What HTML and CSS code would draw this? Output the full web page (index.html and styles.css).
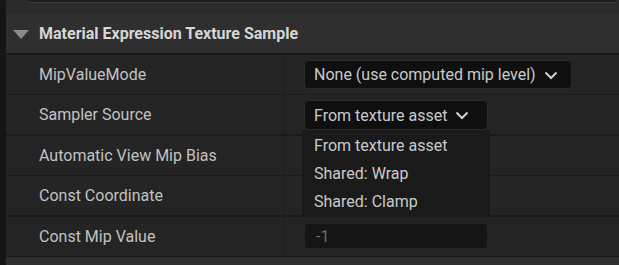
FILE: index.html
```html
<!DOCTYPE html>
<html>
<head>
<meta charset="utf-8">
<link rel="stylesheet" href="styles.css">
</head>
<body>
<div class="app">
  <div class="strip"></div>
  <div class="main">
    <div class="topbar"><div class="topbox"></div></div>
    <div class="header">
      <svg class="tri" width="16" height="9" viewBox="0 0 16 9"><polygon points="0,0 16,0 8,9" fill="#8c8c8c"/></svg>
      <span class="title">Material Expression Texture Sample</span>
    </div>
    <div class="group">
      <div class="row">
        <div class="name">MipValueMode</div>
        <div class="value">
          <div class="combo combo1">
            <span>None (use computed mip level)</span>
            <svg class="chev" width="14" height="9" viewBox="0 0 14 9"><polyline points="1.5,1.5 7,7 12.5,1.5" fill="none" stroke="#d0d0d0" stroke-width="2"/></svg>
          </div>
        </div>
      </div>
      <div class="row">
        <div class="name">Sampler Source</div>
        <div class="value">
          <div class="combo-wrap">
            <div class="combo combo2">
              <span>From texture asset</span>
              <svg class="chev" width="14" height="9" viewBox="0 0 14 9"><polyline points="1.5,1.5 7,7 12.5,1.5" fill="none" stroke="#d0d0d0" stroke-width="2"/></svg>
            </div>
            <div class="menu">
              <div class="item">From texture asset</div>
              <div class="item">Shared: Wrap</div>
              <div class="item">Shared: Clamp</div>
            </div>
          </div>
        </div>
      </div>
    </div>
    <div class="group">
      <div class="row">
        <div class="name">Automatic View Mip Bias</div>
        <div class="value"></div>
      </div>
      <div class="row">
        <div class="name">Const Coordinate</div>
        <div class="value"></div>
      </div>
    </div>
    <div class="group last">
      <div class="row">
        <div class="name">Const Mip Value</div>
        <div class="value">
          <div class="numbox">-1</div>
        </div>
      </div>
    </div>
    <div class="bottom"></div>
  </div>
</div>
</body>
</html>
```
FILE: styles.css
```css
html, body {
  margin: 0;
  padding: 0;
  background: #151515;
  width: 619px;
  height: 265px;
  overflow: hidden;
  font-family: Roboto, "Liberation Sans", sans-serif;
}
.app {
  display: flex;
  height: 265px;
}
.strip {
  width: 6px;
  background: #151515;
  flex: none;
}
.main {
  flex: 1;
  display: flex;
  flex-direction: column;
  background: #1b1b1b;
}
.topbar {
  height: 14px;
  background: #2a2a2a;
  flex: none;
}
.topbox {
  height: 2px;
  margin-left: 21px;
  margin-right: 2px;
  background: #1e1e1e;
  border-bottom: 1px solid #3a3a3a;
  border-bottom-left-radius: 4px;
}
.header {
  height: 39px;
  background: #2f2f2f;
  border-bottom: 2px solid #1a1a1a;
  display: flex;
  align-items: center;
  flex: none;
}
.tri {
  margin-left: 7px;
  margin-top: 1px;
}
.title {
  margin-left: 10px;
  font-weight: bold;
  font-size: 16px;
  color: #d6d6d6;
}
.group {
  display: flex;
  flex-direction: column;
  margin-bottom: 2px;
  flex: none;
}
.group.last {
  margin-bottom: 0;
}
.row {
  height: 39px;
  display: flex;
  background: #242424;
  border-bottom: 1px solid #1b1b1b;
}
.group .row:last-child {
  border-bottom: none;
}
.group.last .row:last-child {
  border-bottom: 1px solid #1b1b1b;
}
.name {
  width: 278px;
  border-right: 1px solid #1b1b1b;
  padding-left: 33px;
  box-sizing: border-box;
  display: flex;
  align-items: center;
  font-size: 16px;
  color: #c2c2c2;
  flex: none;
}
.value {
  flex: 1;
  display: flex;
  align-items: center;
  padding-left: 20px;
}
.combo {
  display: flex;
  align-items: center;
  height: 29px;
  box-sizing: border-box;
  background: #0f0f0f;
  border: 1px solid #2a2a2a;
  border-radius: 4px;
  padding: 0 0 0 9px;
  gap: 8px;
  font-size: 16px;
  color: #cacaca;
  white-space: nowrap;
}
.combo1 {
  width: 268px;
}
.combo2 {
  width: 184px;
  height: 30px;
}
.chev {
  margin-top: 1px;
}
.combo-wrap {
  position: relative;
  margin-top: 1px;
}
.menu {
  position: absolute;
  left: -2px;
  top: 30px;
  width: 188px;
  height: 85px;
  padding-top: 1px;
  box-sizing: border-box;
  background: #1a1a1a;
  z-index: 5;
}
.item {
  height: 28px;
  line-height: 29px;
  padding-left: 12px;
  font-size: 16px;
  color: #cacaca;
}
.numbox {
  width: 184px;
  height: 26px;
  box-sizing: border-box;
  background: #151515;
  border: 1px solid #262626;
  border-radius: 4px;
  padding-left: 11px;
  display: flex;
  align-items: center;
  font-size: 16px;
  color: #6e6e6e;
  margin-top: -1px;
}
.bottom {
  flex: 1;
  background: #2f2f2f;
}
```
